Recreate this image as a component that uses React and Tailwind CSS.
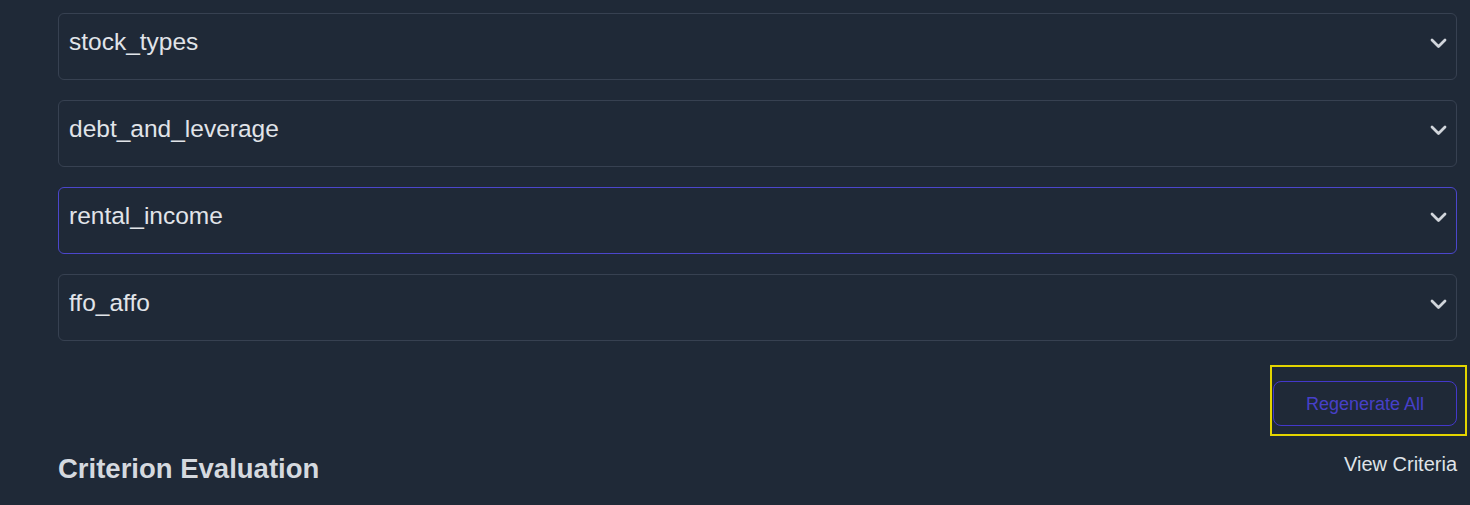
import React from "react";

const items = [
  { label: "stock_types", active: false },
  { label: "debt_and_leverage", active: false },
  { label: "rental_income", active: true },
  { label: "ffo_affo", active: false },
];

function Chevron() {
  return (
    <svg width="17" height="11" viewBox="0 0 17 11" fill="none" className="shrink-0 mt-[2px] mr-[-1px]">
      <polyline points="2,2 8.5,8.5 15,2" stroke="#d1d5db" strokeWidth="2.8" strokeLinecap="round" strokeLinejoin="round" />
    </svg>
  );
}

export default function App() {
  return (
    <div className="min-h-[505px] w-full bg-[#1f2937] font-['Liberation_Sans',Arial,sans-serif]">
      <div className="ml-[58px] mr-[13px] pt-[13px]">
        <div className="flex flex-col gap-[20px]">
          {items.map((it) => (
            <div
              key={it.label}
              className={
                it.active
                  ? "flex h-[67px] items-start justify-between rounded-md border border-[#4b46cb] pl-[10px] pr-[10px] pt-[12px]"
                  : "flex h-[67px] items-start justify-between rounded-md border border-[#374151] pl-[10px] pr-[10px] pt-[12px]"
              }
            >
              <span className="text-[24.5px] leading-8 text-[#e1e4e9]">{it.label}</span>
              <div className="flex h-8 items-center">
                <Chevron />
              </div>
            </div>
          ))}
        </div>

        <div className="mt-[40px] flex justify-end">
          <div className="relative">
            <span className="pointer-events-none absolute -left-[3px] -right-[10px] -top-[16px] -bottom-[10px] border-2 border-[#e3d400]" />
            <button className="flex h-[45px] items-center rounded-lg border border-[#4338ca] px-8 text-lg text-[#4740c9]">
              Regenerate All
            </button>
          </div>
        </div>

        <div className="mt-[25px] flex items-start justify-between">
          <h2 className="text-[27.5px] font-bold leading-9 text-[#d5d9df]">Criterion Evaluation</h2>
          <span className="-mt-[1px] text-xl text-[#dfe3e8]">View Criteria</span>
        </div>
      </div>
    </div>
  );
}
